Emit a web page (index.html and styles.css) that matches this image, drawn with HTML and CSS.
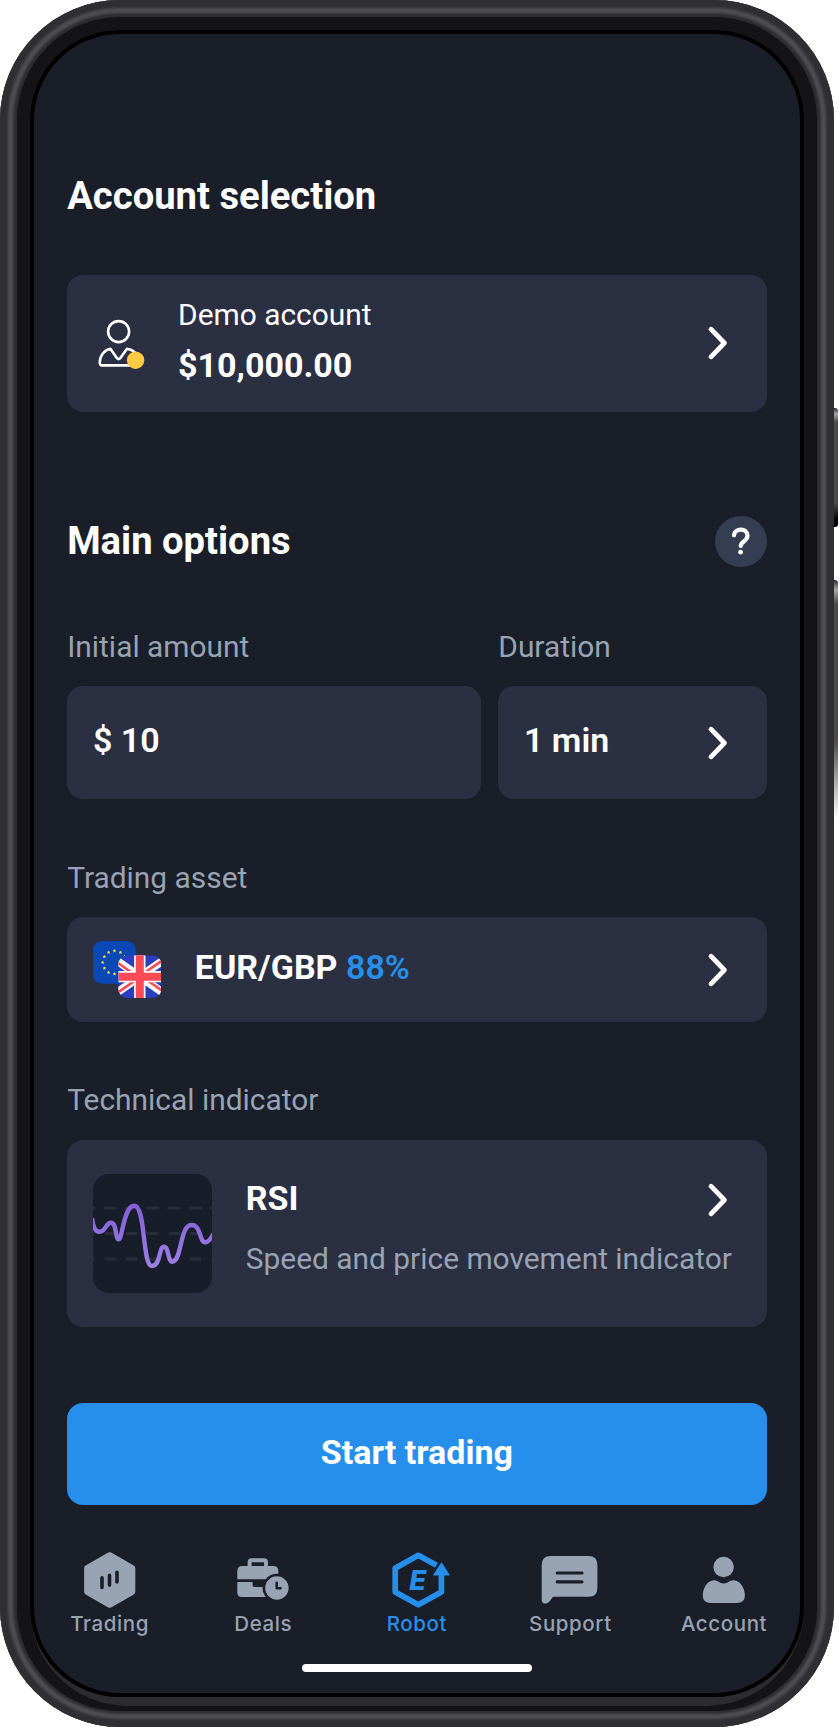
FILE: index.html
```html
<!DOCTYPE html>
<html lang="en">
<head>
    <meta charset="UTF-8">
    <meta name="viewport" content="width=device-width, initial-scale=1.0">
    <title>Trading Robot</title>
    <link rel="stylesheet" href="styles.css">
</head>
<body>
    <svg class="defs" width="0" height="0">
        <symbol id="chevron" viewBox="0 0 24 36">
            <path d="M5 4.2 18.4 18 5 31.8" fill="none" stroke="#fff" stroke-width="4.8" stroke-linecap="round" stroke-linejoin="round"/>
        </symbol>
        <symbol id="star" viewBox="-2 -2 4 4">
            <path d="M0-2 .6-.65 1.9-.6.85.25 1.2 1.6 0 .85-1.2 1.6-.85.25-1.9-.6-.6-.65Z" fill="#ffe04a"/>
        </symbol>
    </svg>

    <div class="phone">
        <div class="side-btn power"></div>
        <div class="side-btn volume"></div>
        <div class="bezel">
            <div class="glass">
                <main class="screen">
                    <h2 class="title">Account selection</h2>

                    <div class="card account">
                        <svg class="user-icon" width="56" height="52" viewBox="0 0 56 52">
                            <g fill="none" stroke="#fff" stroke-width="2.6" stroke-linejoin="round">
                                <circle cx="25.6" cy="14.6" r="10.5"/>
                                <path d="M42 35.5C40 33.6 37 32.2 34 31.8L27.2 41.2Q25.6 43 24 41.2L17.4 31.8C11.4 33 6.8 38.7 6.8 45.4Q6.6 48.4 9.2 48.4H40"/>
                            </g>
                            <circle cx="42.6" cy="43.2" r="8.7" fill="#ffcb44"/>
                        </svg>
                        <div class="account-info">
                            <div class="text">Demo account</div>
                            <div class="balance">$10,000.00</div>
                        </div>
                        <svg class="chevron"><use href="#chevron"/></svg>
                    </div>

                    <div class="title-row">
                        <h2 class="title">Main options</h2>
                        <div class="help">
                            <svg width="20" height="28" viewBox="0 0 20 28">
                                <path d="M3 8.2C3.4 4.8 6.2 2.7 9.8 2.7C13.8 2.7 16.5 5 16.5 8.6C16.5 11.4 14.9 12.9 12.8 14.5C10.6 16.2 9.8 17 9.8 19" fill="none" stroke="#fff" stroke-width="4.2" stroke-linecap="round"/>
                                <circle cx="9.6" cy="25.2" r="2.4" fill="#fff"/>
                            </svg>
                        </div>
                    </div>

                    <div class="fields">
                        <div>
                            <div class="label">Initial amount</div>
                            <div class="card amount"><span class="value">$ 10</span></div>
                        </div>
                        <div>
                            <div class="label">Duration</div>
                            <div class="card amount">
                                <span class="value">1 min</span>
                                <svg class="chevron"><use href="#chevron"/></svg>
                            </div>
                        </div>
                    </div>

                    <div class="label asset-label">Trading asset</div>
                    <div class="card asset">
                        <svg width="68.3" height="57" viewBox="0 0 68.3 57">
                            <clipPath id="uk"><rect width="43" height="42.7" rx="9"/></clipPath>
                            <rect width="42.7" height="42.7" rx="9" fill="#0a49b5"/>
                            <g>
                                <use href="#star" x="19.5" y="7.8" width="4" height="4"/>
                                <use href="#star" x="25.4" y="9.4" width="4" height="4"/>
                                <use href="#star" x="29.6" y="13.7" width="4" height="4"/>
                                <use href="#star" x="13.6" y="9.4" width="4" height="4"/>
                                <use href="#star" x="9.4" y="13.7" width="4" height="4"/>
                                <use href="#star" x="7.7" y="19.5" width="4" height="4"/>
                                <use href="#star" x="9.4" y="25.2" width="4" height="4"/>
                                <use href="#star" x="13.6" y="29.5" width="4" height="4"/>
                                <use href="#star" x="19.5" y="31" width="4" height="4"/>
                            </g>
                            <g transform="translate(25.3 14.3)" clip-path="url(#uk)">
                                <rect width="43" height="42.7" fill="#2a3fc0"/>
                                <path d="M-2 5 45 37.7M45 5-2 37.7" stroke="#f9f9fb" stroke-width="8"/>
                                <path d="M-2 6.5 18 20.5M45 4.5 24 19M-2 38.2 19 23.7M45 36.2 25 22.2" stroke="#ff4b55" stroke-width="2.6"/>
                                <path d="M21.5 0V43M0 21.35H43" stroke="#f9f9fb" stroke-width="11.4"/>
                                <path d="M21.5 0V43M0 21.35H43" stroke="#ff4b55" stroke-width="8"/>
                            </g>
                        </svg>
                        <span class="value">EUR/GBP <span class="percent">88%</span></span>
                        <svg class="chevron"><use href="#chevron"/></svg>
                    </div>

                    <div class="label indicator-label">Technical indicator</div>
                    <div class="card indicator">
                        <svg class="rsi-chart" width="119.3" height="119" viewBox="0 0 119.3 119">
                            <defs>
                                <linearGradient id="wave" x1="0" y1="0" x2="0" y2="1">
                                    <stop offset="0" stop-color="#8560d8"/>
                                    <stop offset="1" stop-color="#9b7fe6"/>
                                </linearGradient>
                            </defs>
                            <rect width="119.3" height="119" fill="#171e29"/>
                            <g stroke="#262e39" stroke-width="3">
                                <path d="M-9.6 34H125" stroke-dasharray="10.6 10.73" stroke-linecap="round"/>
                                <path d="M-9.7 59.6H125M-9.7 85H125" stroke-dasharray="11 10.33"/>
                            </g>
                            <path d="M-1 44C0 52 1.5 57.8 6.3 57.8C13 57.8 12.5 48.7 18 48.7C24 48.7 22 65.3 25.7 65.3C29.5 65.3 30.5 31.7 41.3 31.7C53 31.7 49 92 59 92C68 92 65.5 72.7 71 72.7C76 72.7 74.5 87.7 79.3 87.7C89 87.7 86.5 51 98.5 51C108.5 51 106 68.3 112.3 68.3C116 68.3 118 64 120.5 60" fill="none" stroke="url(#wave)" stroke-width="4.4"/>
                        </svg>
                        <div class="indicator-info">
                            <div class="indicator-head">
                                <span class="indicator-name">RSI</span>
                                <svg class="chevron"><use href="#chevron"/></svg>
                            </div>
                            <div class="indicator-desc">Speed and price movement indicator</div>
                        </div>
                    </div>

                    <button class="start-btn">Start trading</button>

                    <nav class="tabs">
                        <div class="tab">
                            <svg width="80" height="56" viewBox="0 0 80 56">
                                <path d="M39.7 3.2 62.3 16.2V39.8L39.7 52.8 17.1 39.8V16.2Z" fill="#98a3b3" stroke="#98a3b3" stroke-width="6" stroke-linejoin="round"/>
                                <path d="M32 25.7V35.5M39.5 23.3V33.1M47 20.2V30" stroke="#1a1e29" stroke-width="3.6" stroke-linecap="round"/>
                            </svg>
                            <span>Trading</span>
                        </div>
                        <div class="tab">
                            <svg width="80" height="56" viewBox="0 0 80 56">
                                <path d="M26.6 16V10.5Q26.6 8.3 28.8 8.3H40.8Q43 8.3 43 10.5V16" fill="none" stroke="#98a3b3" stroke-width="4"/>
                                <path d="M14.3 27.3V19Q14.3 14 19.3 14H50.3Q55.3 14 55.3 19V27.3Z" fill="#98a3b3"/>
                                <path d="M14.3 30H29.6V33.2Q29.6 34.9 31.3 34.9H45V45H18.8Q14.3 45 14.3 40.5Z" fill="#98a3b3"/>
                                <circle cx="53.9" cy="36" r="13" fill="#98a3b3" stroke="#1a1e29" stroke-width="2.6"/>
                                <path d="M53.7 30.8V36.2H57.6" fill="none" stroke="#1a1e29" stroke-width="2.5" stroke-linecap="round" stroke-linejoin="round"/>
                            </svg>
                            <span>Deals</span>
                        </div>
                        <div class="tab active">
                            <svg width="80" height="56" viewBox="0 0 80 56">
                                <path d="M59.5 13.3 41.3 3.3 18.2 16.3V39.9L41.3 52.8 64.4 39.9V20" fill="none" stroke="#268fec" stroke-width="5.7" stroke-linejoin="round"/>
                                <path d="M64.4 11.2 72 22.9H56.9Z" fill="#268fec" stroke="#268fec" stroke-width="1.2" stroke-linejoin="round"/>
                                <text class="robot-letter" x="32.2" y="38">E</text>
                            </svg>
                            <span>Robot</span>
                        </div>
                        <div class="tab">
                            <svg width="80" height="56" viewBox="0 0 80 56">
                                <path d="M20.7 4H58.5Q67.4 4 67.4 13V35.7Q67.4 44.7 58.5 44.7H24C22.5 44.7 21.7 46.5 19.7 49.2C16.7 53 11.7 52.2 11.7 47.7V13Q11.7 4 20.7 4Z" fill="#98a3b3"/>
                                <path d="M27.2 21H52M27.2 29.8H52" stroke="#1a1e29" stroke-width="3.2" stroke-linecap="round"/>
                            </svg>
                            <span>Support</span>
                        </div>
                        <div class="tab">
                            <svg width="80" height="56" viewBox="0 0 80 56">
                                <circle cx="39.6" cy="15" r="10.2" fill="#98a3b3"/>
                                <path d="M28.5 28.5C33.5 27.5 35 31.5 39.7 31.5C44.5 31.5 46 27.5 51 28.5C57 29.5 60.9 37 60.9 43.5Q60.9 51 52.5 51H27Q18.8 51 18.8 43.5C18.8 37 22.5 29.5 28.5 28.5Z" fill="#98a3b3"/>
                            </svg>
                            <span>Account</span>
                        </div>
                    </nav>

                    <div class="home-bar"></div>
                </main>
            </div>
        </div>
    </div>
</body>
</html>
```
FILE: styles.css
```css
* {
    box-sizing: border-box;
}
body {
    margin: 0;
    background: #fff;
    color: #fff;
    font-family: Roboto, sans-serif;
}
svg {
    display: block;
    flex-shrink: 0;
}
.defs {
    position: absolute;
}

/* phone body */
.phone {
    position: relative;
    width: 833.5px;
    height: 1727px;
    padding: 17px 17px 16px;
    border-radius: 120px;
    background: #2c2b2f;
    box-shadow:
        inset 0 0 3px 8px #2f2e32,
        inset 0 0 3px 13px #525256;
}
.side-btn {
    position: absolute;
    left: 834px;
    width: 4px;
}
.power {
    top: 408px;
    height: 119px;
    border-radius: 0 3px 3px 0;
    background: linear-gradient(#333, #a8a8a8 6px, #4c4b48 14px, #4c4b48 95px, #000 112px);
}
.volume {
    top: 580px;
    height: 238px;
    border-radius: 0 3px 0 0;
    background: linear-gradient(#333, #a8a8a8 10px, #4c4b48 24px, #4c4b48 160px, #fff);
}
.bezel {
    height: 1694px;
    padding: 13px 13px 5px;
    border-radius: 103px;
    background: #141416;
}
.glass {
    height: 1676px;
    padding-bottom: 9px;
    border-radius: 90px 90px 98px 98px;
    background: #2c2b2f;
}
.screen {
    display: flex;
    flex-direction: column;
    height: 1667px;
    padding: 140px 33px 0 33.2px;
    border: 4px solid #000;
    border-radius: 90px;
    background: #1a1e29;
}

/* headings and text */
.title {
    margin: 0;
    font-size: 38.2px;
    font-weight: 700;
    line-height: 44px;
}
.title-row {
    display: flex;
    align-items: center;
    justify-content: space-between;
    margin-top: 103.7px;
}
.label {
    margin-bottom: 22.3px;
    font-size: 29.9px;
    line-height: 34px;
    color: #98a3b3;
}
.value,
.start-btn {
    padding-bottom: 5px;
    font-size: 34px;
    font-weight: 700;
    line-height: 40px;
}
.help {
    display: flex;
    align-items: center;
    justify-content: center;
    width: 51.5px;
    height: 51.5px;
    border-radius: 50%;
    background: #353d52;
}

/* cards */
.card {
    display: flex;
    align-items: center;
    padding: 0 36.2px 0 25.7px;
    border-radius: 16px;
    background: #2b2f42;
}
.chevron {
    width: 24px;
    height: 36px;
    margin-left: auto;
}
.account {
    height: 137.5px;
    margin-top: 56.5px;
}
.account-info {
    display: flex;
    flex-direction: column;
    gap: 13px;
    margin-left: 29.2px;
    padding-bottom: 3px;
}
.text {
    font-size: 29.9px;
    line-height: 34px;
}
.balance {
    font-size: 34px;
    font-weight: 700;
    line-height: 40px;
}
.fields {
    display: grid;
    grid-template-columns: 413.5px 1fr;
    gap: 17.6px;
    margin-top: 62.5px;
}
.amount {
    height: 113.5px;
}
.amount .value {
    font-weight: 600;
}
.asset-label {
    margin-top: 61.5px;
}
.asset {
    height: 105px;
}
.asset .value {
    margin-left: 33.6px;
}
.percent {
    color: #268fec;
    font-weight: 600;
}
.indicator-label {
    margin-top: 61px;
}
.indicator {
    align-items: flex-start;
    height: 187px;
    padding-top: 34px;
}
.rsi-chart {
    border-radius: 16px;
}
.indicator-info {
    flex: 1;
    min-width: 0;
    margin-left: 33.6px;
    padding-top: 4px;
}
.indicator-head {
    display: flex;
    align-items: center;
    height: 40px;
}
.indicator-head .chevron {
    margin-top: 5px;
}
.indicator-name {
    font-size: 34px;
    font-weight: 700;
}
.indicator-desc {
    margin-top: 24px;
    font-size: 29.9px;
    line-height: 34px;
    white-space: nowrap;
    color: #98a3b3;
}
.start-btn {
    height: 102px;
    flex-shrink: 0;
    margin-top: 76.7px;
    border: none;
    border-radius: 16px;
    background: #268fec;
    color: #fff;
    font-family: inherit;
}

/* bottom navigation */
.tabs {
    display: grid;
    grid-template-columns: repeat(5, 153.6px);
    justify-content: center;
    margin-top: 46.5px;
}
.tab {
    display: flex;
    flex-direction: column;
    align-items: center;
    font-family: Inter, sans-serif;
    font-size: 20.5px;
    font-weight: 500;
    line-height: 24px;
    letter-spacing: 0.6px;
    color: #98a3b3;
}
.tab span {
    margin-top: 4px;
}
.active {
    color: #268fec;
}
.robot-letter {
    fill: #268fec;
    font-family: Inter, sans-serif;
    font-size: 27.5px;
    font-weight: 800;
    font-style: italic;
}
.home-bar {
    width: 230px;
    height: 8px;
    margin: 28px auto 0;
    border-radius: 4px;
    background: #fff;
}
```
